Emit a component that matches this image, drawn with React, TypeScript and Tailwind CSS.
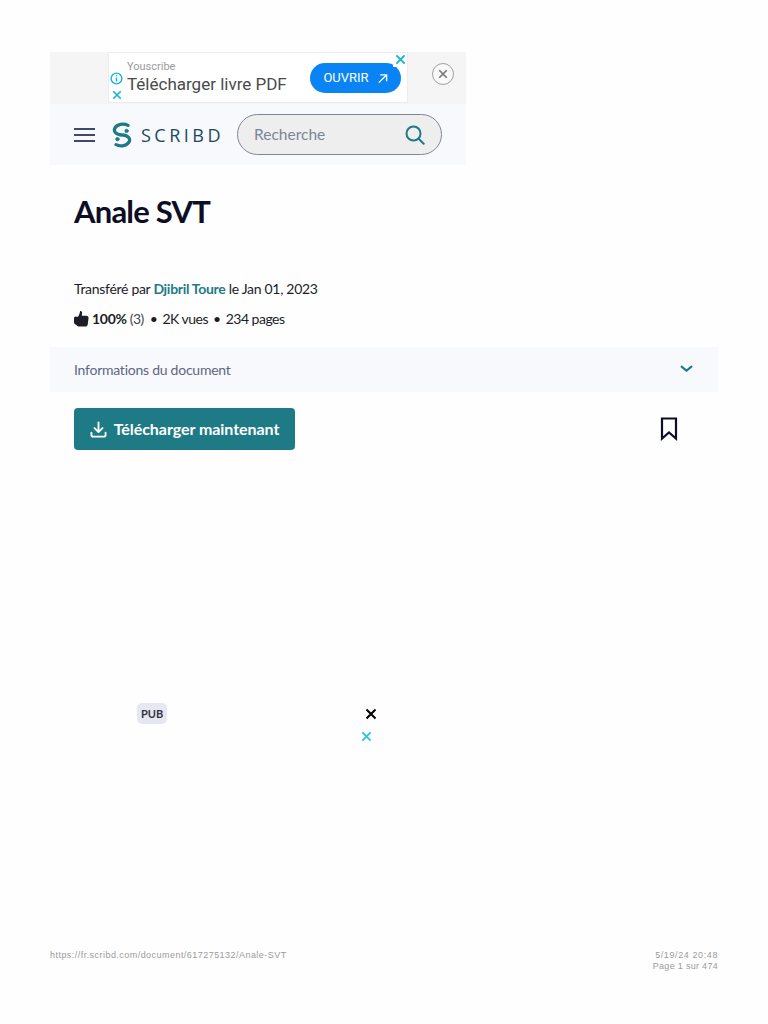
import React from 'react';

const sans = { fontFamily: '"Lato", "Liberation Sans", sans-serif' };

const CloseIcon = ({ className }: { className: string }) => (
  <svg viewBox="0 0 12 12" className={className} fill="none" stroke="currentColor" strokeWidth="2">
    <path d="M1.5 1.5l9 9M10.5 1.5l-9 9" />
  </svg>
);

const ScribdLogo = () => (
  <svg viewBox="0 0 24 28" className="h-[26px] w-[22px]" fill="none" stroke="#1e7b85" strokeWidth="3.600" strokeLinecap="round">
    <path d="M18.500 3.500C14 1 6 2 4 7c-1.500 4 2.500 6.500 7 7" />
    <path d="M5.500 24.500c4.500 2.500 12.500 1.500 14.500-3.500 1.500-4-2.500-6.500-7-7" />
    <circle cx="17" cy="9.500" r="1.800" fill="#1e7b85" strokeWidth="1" />
    <circle cx="7" cy="18.500" r="1.800" fill="#1e7b85" strokeWidth="1" />
  </svg>
);

const AdBanner = () => (
  <div className="flex h-[52px] items-start bg-[#f5f5f5] pl-[58px]">
    <div className="relative h-[51px] w-[300px] border border-[#ececec] bg-white">
      <div className="absolute left-[1px] top-[19px] flex flex-col items-center gap-[5px] text-[#12b5d8]">
        <svg viewBox="0 0 14 14" className="h-[13px] w-[13px]" fill="none" stroke="currentColor" strokeWidth="1.500">
          <circle cx="7" cy="7" r="5.800" />
          <path d="M7 6v4.200M7 3.500v1.200" />
        </svg>
        <CloseIcon className="h-[10px] w-[10px]" />
      </div>
      <div className="pl-[18px] pt-[8px]" style={{ fontFamily: '"Roboto", sans-serif' }}>
        <div className="text-[11px] leading-[12px] text-[#9a9a9a]">Youscribe</div>
        <div className="text-[17px] leading-[22px] text-[#4a4a4a]">Télécharger livre PDF</div>
      </div>
      <div
        className="absolute left-[201px] top-[10px] flex h-[30px] w-[91px] items-center justify-center gap-[8px] rounded-full bg-[#0a84f5] text-[13px] text-white"
        style={{ fontFamily: '"Roboto", sans-serif' }}
      >
        <span>OUVRIR</span>
        <svg viewBox="0 0 12 12" className="h-[11px] w-[11px]" fill="none" stroke="currentColor" strokeWidth="1.500">
          <path d="M2 10.500 10 2.500M3.500 2h7v7" />
        </svg>
      </div>
      <div className="absolute right-0 top-0 bg-white pb-[2px] pl-[2px] pr-[1px] pt-[1px] text-[#12b5d8]">
        <CloseIcon className="h-[11px] w-[11px]" />
      </div>
    </div>
    <div className="ml-[24px] mt-[11px] flex h-[22px] w-[22px] items-center justify-center rounded-full border border-[#a0a0a0] bg-white/40 text-[#777777]">
      <CloseIcon className="h-[10px] w-[10px]" />
    </div>
  </div>
);

const NavBar = () => (
  <div className="flex h-[61px] items-center bg-[#f8f9fd] pl-[24px]">
    <div className="flex w-[21px] flex-col gap-[4px]">
      <div className="h-[2px] bg-[#3d4a6b]" />
      <div className="h-[2px] bg-[#3d4a6b]" />
      <div className="h-[2px] bg-[#3d4a6b]" />
    </div>
    <div className="ml-[16px]">
      <ScribdLogo />
    </div>
    <span
      className="ml-[8px] text-[18px] leading-none tracking-[3.500px] text-[#1c4a5c]"
      style={{ fontFamily: '"Open Sans", sans-serif' }}
    >
      SCRIBD
    </span>
    <div className="ml-[13px] flex h-[41px] w-[205px] items-center justify-between rounded-full border border-[#7f8698] bg-[#eeeeee] pl-[16px] pr-[16px]">
      <span className="text-[15.500px] text-[#7d8598]">Recherche</span>
      <svg viewBox="0 0 20 20" className="h-[20px] w-[20px]" fill="none" stroke="#1e7b85" strokeWidth="2" strokeLinecap="round">
        <circle cx="8.500" cy="8.500" r="7" />
        <path d="m13.700 13.700 5 5" />
      </svg>
    </div>
  </div>
);

const ThumbIcon = () => (
  <svg viewBox="0 0 16 17" className="h-[17px] w-[15px]" fill="#1d1d26">
    <path d="M6.500 0.500c1.400-.5 2.300.8 2.100 2.200L8.300 5.500h4.700c1.800 0 2.700 1 2.500 2.500l-.8 6.500c-.2 1.500-1.300 2.500-3 2.500H5c-1.200 0-2-.8-2.300-1.500L1 14.500C.3 14 0 13 0 12V8.500C0 7 1 6.200 2.200 6.500l2 .2C5.500 5 6.300 2.500 6.500.5z" />
  </svg>
);

const App: React.FC = () => {
  return (
    <div className="min-h-[1024px] bg-[#fefefe] pt-[52px]" style={sans}>
      <div className="mx-[50px] w-[668px]">
        <div className="w-[416px]">
          <AdBanner />
          <NavBar />
        </div>

        <div className="pl-[24px]">
          <h1 className="mt-[28px] text-[31px] font-bold leading-[36px] tracking-[-0.800px] text-[#0d0e25]">Anale SVT</h1>
          <p className="mt-[50px] text-[14px] leading-[20px] tracking-[-0.300px] text-[#1c1c28]">
            Transféré par <span className="font-bold text-[#1e7b85]">Djibril Toure</span> le Jan 01, 2023
          </p>
          <div className="mt-[9px] flex h-[20px] items-center text-[14px] tracking-[-0.500px] text-[#1c1c28]">
            <ThumbIcon />
            <span className="ml-[3px] font-bold tracking-[-0.300px]">100%</span>
            <span className="ml-[3px] text-[#44444f]">(3)</span>
            <span className="ml-[6px] mr-[5px]">•</span>
            <span>2K vues</span>
            <span className="mx-[5px]">•</span>
            <span>234 pages</span>
          </div>
        </div>

        <div className="mt-[19px] flex h-[45px] items-center justify-between bg-[#f8f9fd] pl-[24px] pr-[25px]">
          <span className="text-[14px] tracking-[-0.250px] text-[#5d6780]">Informations du document</span>
          <svg viewBox="0 0 14 9" className="mb-[2px] h-[8px] w-[13px]" fill="none" stroke="#1e7b85" strokeWidth="2.400" strokeLinecap="round" strokeLinejoin="round">
            <path d="M1.500 1.800 7 6.500l5.500-4.700" />
          </svg>
        </div>

        <div className="mt-[16px] flex items-center justify-between pl-[24px] pr-[40px]">
          <div className="flex h-[42px] w-[221px] items-center justify-center gap-[7px] rounded-[4px] bg-[#1e7b85] text-[16px] font-bold tracking-[-0.050px] text-white">
            <svg viewBox="0 0 18 18" className="h-[17px] w-[17px]" fill="none" stroke="currentColor" strokeWidth="2" strokeLinecap="round" strokeLinejoin="round">
              <path d="M9 1.500v10M4.800 7.500 9 11.700l4.200-4.200M1.500 12.500v2c0 1 .7 2 2 2h11c1.300 0 2-1 2-2v-2" />
            </svg>
            <span>Télécharger maintenant</span>
          </div>
          <svg viewBox="0 0 18 24" className="h-[24px] w-[18px]" fill="none" stroke="#0d0e25" strokeWidth="2.200">
            <path d="M2 1.500h14v20l-7-6-7 6z" />
          </svg>
        </div>

        <div className="ml-[87px] mt-[253px] w-[242px]">
          <div className="flex items-center justify-between">
            <span className="rounded-[5px] bg-[#e5e8f1] px-[4px] text-[11px] font-bold leading-[21px] text-[#33343f]">PUB</span>
            <span className="mr-[2px] text-black">
              <CloseIcon className="h-[12px] w-[12px]" />
            </span>
          </div>
          <div className="mt-[7px] flex justify-end pr-[7px] text-[#2ac3e6]">
            <CloseIcon className="h-[11px] w-[11px]" />
          </div>
        </div>

        <div className="mt-[208px] flex items-start justify-between text-[9px] leading-[11px] text-[#9b9b9b]" style={{ fontFamily: '"Liberation Sans", sans-serif' }}>
          <span className="tracking-[0.460px]">https://fr.scribd.com/document/617275132/Anale-SVT</span>
          <div className="text-right tracking-[0.300px]">
            <div className="tracking-[0.600px]">5/19/24 20:48</div>
            <div>Page 1 sur 474</div>
          </div>
        </div>
      </div>
    </div>
  );
};

export default App;
